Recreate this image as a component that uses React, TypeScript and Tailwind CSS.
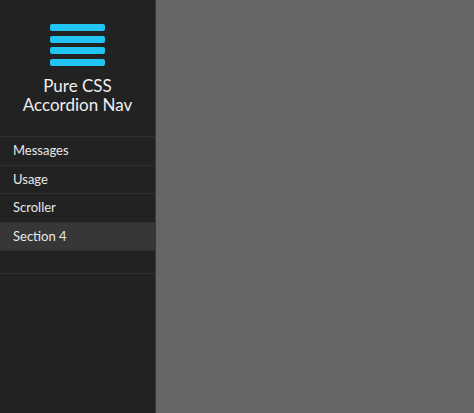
const items = ["Messages", "Usage", "Scroller", "Section 4"];

export default function App() {
  return (
    <div className="flex h-[413px] w-[474px] font-['Lato',sans-serif]">
      {/* sidebar */}
      <aside className="flex w-[156px] flex-col border-r border-[#3a3a3a] bg-[#222222]">
        <div className="flex h-[136px] flex-col items-center pt-[24px]">
          <div className="flex w-[55px] flex-col gap-[4.7px]">
            <span className="h-[7px] rounded-[2px] bg-[#21c4f3]" />
            <span className="h-[7px] rounded-[2px] bg-[#21c4f3]" />
            <span className="h-[7px] rounded-[2px] bg-[#21c4f3]" />
            <span className="h-[7px] rounded-[2px] bg-[#21c4f3]" />
          </div>
          <p className="mt-[10px] text-center text-[17px] leading-[19px] text-[#eeeeee]">
            Pure CSS
            <br />
            Accordion Nav
          </p>
        </div>

        <nav className="flex flex-col">
          {items.map((label, i) => (
            <div
              key={label}
              className={`flex h-[28.5px] items-center border-t border-[#2f2f2f] pl-[13px] text-[13px] text-[#e8e8e8] ${
                i === 3 ? "bg-[#373737]" : ""
              }`}
            >
              {label}
            </div>
          ))}
          <div className="h-[24px] border-y border-[#2f2f2f]" />
        </nav>
      </aside>

      {/* main */}
      <main className="flex-1 bg-[#666666]" />
    </div>
  );
}
